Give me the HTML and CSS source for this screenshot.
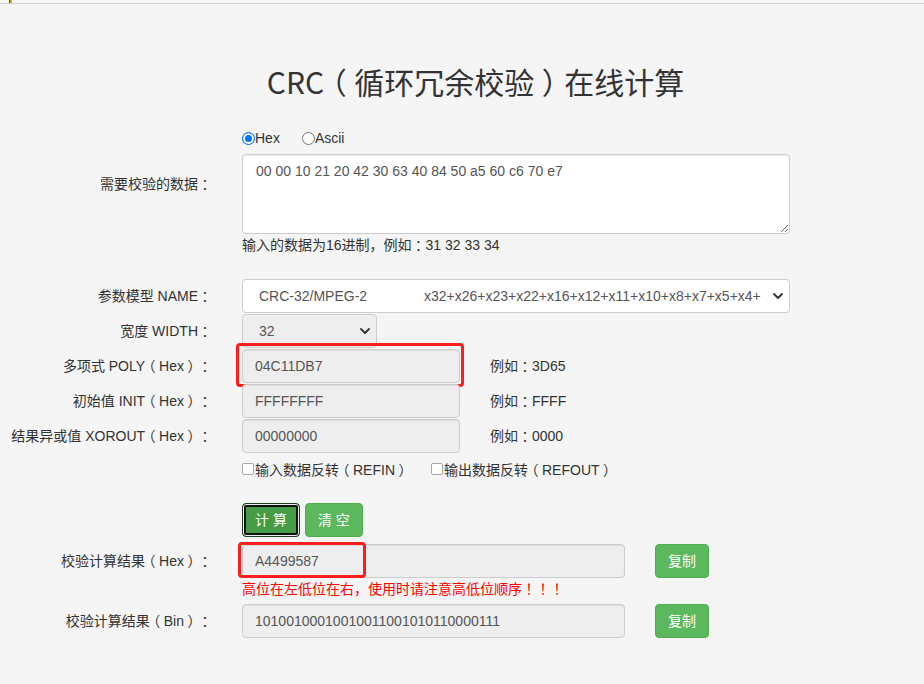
FILE: index.html
```html
<!DOCTYPE html>
<html lang="zh-CN">
<head>
<meta charset="utf-8">
<title>CRC（循环冗余校验）在线计算</title>
<link rel="stylesheet" href="styles.css">
</head>
<body>
<div class="topbar"><span class="tick"></span></div>
<h1 class="title">CRC<span class="fw">（</span>循环冗余校验<span class="fw">）</span>在线计算</h1>
<div class="form">
  <div class="row row-data">
    <div class="label label-data">需要校验的数据<span class="fw">：</span></div>
    <div class="field">
      <div class="radios">
        <span class="radio radio-first"><span class="dot checked"></span>Hex</span>
        <span class="radio"><span class="dot"></span>Ascii</span>
      </div>
      <textarea class="textarea" spellcheck="false">00 00 10 21 20 42 30 63 40 84 50 a5 60 c6 70 e7</textarea>
      <div class="help">输入的数据为16进制，例如<span class="fw">：</span>31 32 33 34</div>
    </div>
  </div>

  <div class="row row-name">
    <div class="label">参数模型 NAME<span class="fw">：</span></div>
    <div class="field">
      <div class="select select-name">
        <span class="opt-name">CRC-32/MPEG-2</span>
        <span class="opt-poly">x32+x26+x23+x22+x16+x12+x11+x10+x8+x7+x5+x4+</span>
        <svg class="chev" width="10" height="6" viewBox="0 0 10 6"><polyline points="1,1 5,5 9,1" fill="none" stroke="#333" stroke-width="1.8" stroke-linecap="round" stroke-linejoin="round"/></svg>
      </div>
    </div>
  </div>

  <div class="row row-param">
    <div class="label">宽度 WIDTH<span class="fw">：</span></div>
    <div class="field">
      <div class="select select-width">
        <span class="opt-name">32</span>
        <svg class="chev" width="10" height="6" viewBox="0 0 10 6"><polyline points="1,1 5,5 9,1" fill="none" stroke="#333" stroke-width="1.8" stroke-linecap="round" stroke-linejoin="round"/></svg>
      </div>
    </div>
  </div>

  <div class="row row-param">
    <div class="label">多项式 POLY<span class="fw">（</span>Hex<span class="fw">）</span><span class="fw">：</span></div>
    <div class="field field-inline">
      <input class="input input-short" type="text" value="04C11DB7" readonly>
      <span class="mark mark-poly"></span>
      <span class="eg">例如<span class="fw">：</span>3D65</span>
    </div>
  </div>

  <div class="row row-param">
    <div class="label">初始值 INIT<span class="fw">（</span>Hex<span class="fw">）</span><span class="fw">：</span></div>
    <div class="field field-inline">
      <input class="input input-short" type="text" value="FFFFFFFF" readonly>
      <span class="eg">例如<span class="fw">：</span>FFFF</span>
    </div>
  </div>

  <div class="row row-param">
    <div class="label">结果异或值 XOROUT<span class="fw">（</span>Hex<span class="fw">）</span><span class="fw">：</span></div>
    <div class="field field-inline">
      <input class="input input-short" type="text" value="00000000" readonly>
      <span class="eg">例如<span class="fw">：</span>0000</span>
    </div>
  </div>

  <div class="row row-checks">
    <div class="label"></div>
    <div class="field field-inline">
      <span class="check check-first"><span class="box"></span>输入数据反转<span class="fw">（</span>REFIN<span class="fw">）</span></span>
      <span class="check"><span class="box"></span>输出数据反转<span class="fw">（</span>REFOUT<span class="fw">）</span></span>
    </div>
  </div>

  <div class="row row-buttons">
    <div class="label"></div>
    <div class="field field-inline buttons">
      <button class="btn btn-active" type="button">计 算</button>
      <button class="btn" type="button">清 空</button>
    </div>
  </div>

  <div class="row row-hex">
    <div class="label">校验计算结果<span class="fw">（</span>Hex<span class="fw">）</span><span class="fw">：</span></div>
    <div class="field field-inline">
      <input class="input input-result" type="text" value="A4499587" readonly>
      <span class="mark mark-hex"></span>
      <button class="btn btn-copy" type="button">复制</button>
    </div>
  </div>

  <div class="row row-warn">
    <div class="label"></div>
    <div class="field warn">高位在左低位在右，使用时请注意高低位顺序<span class="fw">！</span><span class="fw">！</span><span class="fw">！</span></div>
  </div>

  <div class="row row-bin">
    <div class="label">校验计算结果<span class="fw">（</span>Bin<span class="fw">）</span><span class="fw">：</span></div>
    <div class="field field-inline">
      <input class="input input-result" type="text" value="10100100010010011001010110000111" readonly>
      <button class="btn btn-copy" type="button">复制</button>
    </div>
  </div>
</div>
</body>
</html>
```

FILE: styles.css
```css
* {
  box-sizing: border-box;
}

html, body {
  margin: 0;
  background: #f5f5f5;
}

body {
  font-family: "Liberation Sans", "Noto Sans CJK SC", sans-serif;
  font-size: 14px;
  color: #333;
}

/* full-width punctuation drawn centred in its em box */
.fw {
  font-feature-settings: "halt";
  padding: 0 0.25em;
}

.topbar {
  height: 4px;
  background: #f7f7f7;
  border-bottom: 1px solid #d2d2d2;
  position: relative;
}

.tick {
  position: absolute;
  left: 9px;
  top: 0;
  width: 3px;
  height: 3px;
  background: linear-gradient(90deg, #2a4a9a 50%, #d6a92a 50%);
}

.title {
  margin: 60px 0 0;
  padding-left: 27px;
  text-align: center;
  font-family: "Noto Sans CJK SC", sans-serif;
  font-weight: 400;
  font-size: 30px;
  line-height: 34px;
  color: #333;
}

.form {
  margin-top: 30px;
}

.row {
  display: flex;
  align-items: center;
}

.label {
  width: 212px;
  flex: none;
  text-align: right;
  line-height: 20px;
  white-space: nowrap;
}

.field {
  margin-left: 30px;
  position: relative;
}

.field-inline {
  display: flex;
  align-items: center;
  white-space: nowrap;
}

/* data block */
.row-data {
  align-items: flex-start;
}

.label-data {
  padding-top: 46px;
}

.radios {
  display: flex;
  align-items: center;
  height: 20px;
  margin-bottom: 6px;
}

.radio {
  display: inline-flex;
  align-items: center;
  line-height: 20px;
}

.radio-first {
  margin-right: 22px;
}

.dot {
  width: 13px;
  height: 13px;
  border-radius: 50%;
  border: 1px solid #767676;
  background: #fff;
  flex: none;
}

.dot.checked {
  border-color: #0075ff;
  background: #0075ff;
  box-shadow: inset 0 0 0 2px #fff;
}

.textarea {
  display: block;
  width: 548px;
  height: 80px;
  margin: 0;
  padding: 6px 13px;
  border: 1px solid #ccc;
  border-radius: 4px;
  background: #fff;
  font-family: "Liberation Sans", "Noto Sans CJK SC", sans-serif;
  font-size: 14px;
  line-height: 20px;
  color: #555;
  resize: vertical;
  outline: none;
  box-shadow: inset 0 1px 1px rgba(0, 0, 0, 0.075);
}

.help {
  line-height: 20px;
  margin-top: 1px;
}

/* parameter rows */
.row-name {
  margin-top: 24px;
}

.row-param {
  margin-top: 1px;
}

.select {
  height: 34px;
  display: flex;
  align-items: center;
  border: 1px solid #ccc;
  border-radius: 4px;
  padding-left: 16px;
  padding-right: 6px;
  color: #555;
  white-space: nowrap;
  overflow: hidden;
}

.select-name {
  width: 548px;
  background: #fff;
}

.select-width {
  width: 135px;
  background: #eee;
}

.opt-name {
  display: inline-block;
  width: 165px;
  flex: none;
}

.select-width .opt-name {
  width: auto;
}

.opt-poly {
  flex: none;
}

.chev {
  margin-left: auto;
  flex: none;
}

.input {
  height: 34px;
  margin: 0;
  padding: 6px 12px;
  border: 1px solid #ccc;
  border-radius: 4px;
  background: #eee;
  color: #555;
  font-family: "Liberation Sans", "Noto Sans CJK SC", sans-serif;
  font-size: 14px;
  outline: none;
  box-shadow: inset 0 1px 1px rgba(0, 0, 0, 0.075);
}

.input-short {
  width: 218px;
}

.input-result {
  width: 383px;
}

.eg {
  margin-left: 30px;
  line-height: 20px;
}

.mark {
  position: absolute;
  border: 3px solid #ff1c1c;
  border-radius: 4px;
  pointer-events: none;
}

.mark-poly {
  left: -6px;
  top: -6px;
  width: 228px;
  height: 44px;
}

.mark-hex {
  left: -4px;
  top: -2px;
  width: 128px;
  height: 36px;
}

/* checkboxes */
.row-checks {
  margin-top: 7px;
  height: 20px;
}

.check {
  display: inline-flex;
  align-items: center;
  line-height: 20px;
}

.check-first {
  margin-right: 22px;
}

.box {
  width: 12px;
  height: 12px;
  border: 1px solid #a8a8a8;
  border-radius: 2px;
  background: #fff;
  margin-right: 1px;
  margin-top: -2px;
  flex: none;
}

/* buttons */
.row-buttons {
  margin-top: 23px;
}

.buttons {
  gap: 5px;
}

.btn {
  height: 34px;
  margin: 0;
  padding: 0 12px;
  border: 1px solid #4cae4c;
  border-radius: 4px;
  background: #5cb85c;
  color: #fff;
  font-family: "Liberation Sans", "Noto Sans CJK SC", sans-serif;
  font-size: 14px;
  line-height: 32px;
  cursor: pointer;
}

.btn-active {
  background: #449d44;
  border-color: #1f3f1f;
  box-shadow: inset 0 0 0 1px #e6efe6, inset 0 0 0 3px #111;
}

.btn-copy {
  width: 54px;
  padding: 0;
  margin-left: 30px;
}

.row-hex {
  margin-top: 7px;
}

.row-warn {
  margin-top: 1px;
}

.warn {
  color: #ff0000;
  line-height: 20px;
  white-space: nowrap;
}

.row-bin {
  margin-top: 5px;
}
```
